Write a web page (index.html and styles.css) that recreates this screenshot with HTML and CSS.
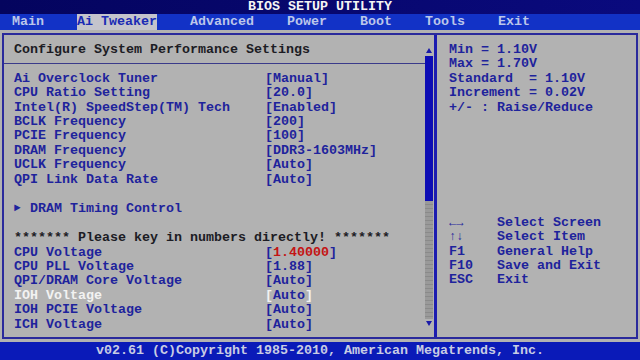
FILE: index.html
```html
<!DOCTYPE html>
<html lang="en">
<head>
    <meta charset="UTF-8">
    <title>BIOS Setup Utility</title>
    <link rel="stylesheet" href="styles.css">
</head>
<body>
    <div class="title">BIOS SETUP UTILITY</div>
    <div class="menu">
        <span>Main</span>
        <span class="active">Ai Tweaker</span>
        <span>Advanced</span>
        <span>Power</span>
        <span>Boot</span>
        <span>Tools</span>
        <span>Exit</span>
    </div>

    <div class="box">
        <div class="left">
            <div class="heading">Configure System Performance Settings</div>
            <div class="sep"></div>

            <div class="row"><span>Ai Overclock Tuner</span><span>[Manual]</span></div>
            <div class="row"><span>CPU Ratio Setting</span><span>[20.0]</span></div>
            <div class="row"><span>Intel(R) SpeedStep(TM) Tech</span><span>[Enabled]</span></div>
            <div class="row"><span>BCLK Frequency</span><span>[200]</span></div>
            <div class="row"><span>PCIE Frequency</span><span>[100]</span></div>
            <div class="row"><span>DRAM Frequency</span><span>[DDR3-1603MHz]</span></div>
            <div class="row"><span>UCLK Frequency</span><span>[Auto]</span></div>
            <div class="row"><span>QPI Link Data Rate</span><span>[Auto]</span></div>
            <div class="blank"></div>
            <div class="row"><span><span class="arrow">&#9658;</span> DRAM Timing Control</span></div>
            <div class="blank"></div>
            <div class="note">******* Please key in numbers directly! *******</div>
            <div class="row"><span>CPU Voltage</span><span>[<span class="red">1.40000</span>]</span></div>
            <div class="row"><span>CPU PLL Voltage</span><span>[1.88]</span></div>
            <div class="row"><span>QPI/DRAM Core Voltage</span><span>[Auto]</span></div>
            <div class="row selected"><span>IOH Voltage</span><span>[<span class="blue">Auto</span>]</span></div>
            <div class="row"><span>IOH PCIE Voltage</span><span>[Auto]</span></div>
            <div class="row"><span>ICH Voltage</span><span>[Auto]</span></div>
        </div>

        <div class="scroll">
            <div class="up"></div>
            <div class="thumb"></div>
            <div class="track"></div>
            <div class="down"></div>
        </div>

        <div class="right">
            <div>Min = 1.10V</div>
            <div>Max = 1.70V</div>
            <div>Standard&nbsp; = 1.10V</div>
            <div>Increment = 0.02V</div>
            <div>+/- : Raise/Reduce</div>

            <div class="keys">
                <span class="small">&larr;&rarr;</span><span>Select Screen</span>
                <span class="small">&uarr;&darr;</span><span>Select Item</span>
                <span>F1</span><span>General Help</span>
                <span>F10</span><span>Save and Exit</span>
                <span>ESC</span><span>Exit</span>
            </div>
        </div>
    </div>

    <div class="footer">v02.61 (C)Copyright 1985-2010, American Megatrends, Inc.</div>
</body>
</html>
```

FILE: styles.css
```css
body {
    margin: 0;
    width: 640px;
    height: 360px;
    overflow: hidden;
    background: #b2b2b2;
    font-family: "Liberation Mono", "DejaVu Sans Mono", monospace;
    font-size: 13.33px;
    font-weight: bold;
    color: #1e239c;
}
.title {
    height: 14px;
    line-height: 13px;
    background: linear-gradient(to right, #04045e, #0a0a7e);
    color: #f4f4f4;
    text-align: center;
}
.menu {
    height: 16px;
    line-height: 16px;
    background: #1232c6;
    color: #bcc6ea;
    display: flex;
    gap: 33px;
    padding-left: 12px;
}
.menu .active {
    background: #c4c4cc;
    color: #1a2ab4;
}
.box {
    margin: 3px 2px 0 2px;
    height: 302px;
    border: 2px solid #2a2a9c;
    display: flex;
}
.left {
    width: 411px;
    padding: 8px 0 0 10px;
    line-height: 14.4px;
}
.heading, .note {
    color: #1c1c24;
}
.sep {
    height: 1px;
    background: #3a3a8a;
    margin: 6px -2px 7.4px -10px;
}
.row {
    display: grid;
    grid-template-columns: 251px auto;
}
.blank {
    height: 14.4px;
}
.arrow {
    font-size: 11px;
    display: inline-block;
    width: 8px;
    vertical-align: 1px;
}
.red {
    color: #c41414;
}
.selected {
    color: #f2f2f2;
}
.selected .blue {
    color: #1e239c;
}
.scroll {
    width: 8px;
    margin-right: 1px;
    display: flex;
    flex-direction: column;
    align-items: center;
}
.up {
    margin-top: 13px;
    width: 0;
    height: 0;
    border-left: 3px solid transparent;
    border-right: 3px solid transparent;
    border-bottom: 5px solid #1a1aa8;
}
.thumb {
    margin-top: 3px;
    width: 8px;
    height: 145px;
    background: #0c0cb4;
}
.track {
    width: 8px;
    height: 118px;
    background: repeating-linear-gradient(#9a9a9a 0 3px, #8a8a8a 3px 4px);
}
.down {
    margin-top: 2px;
    width: 0;
    height: 0;
    border-left: 3px solid transparent;
    border-right: 3px solid transparent;
    border-top: 5px solid #1a1aa8;
}
.right {
    flex: 1;
    border-left: 3px solid #1c1cb0;
    padding: 8px 0 0 12px;
    line-height: 14.4px;
}
.keys {
    margin-top: 100.8px;
    display: grid;
    grid-template-columns: 48px auto;
}
.small {
    font-size: 12px;
}
.footer {
    margin-top: 3px;
    height: 18px;
    line-height: 18px;
    background: #0a1ab8;
    color: #c8cce4;
    text-align: center;
}
```
